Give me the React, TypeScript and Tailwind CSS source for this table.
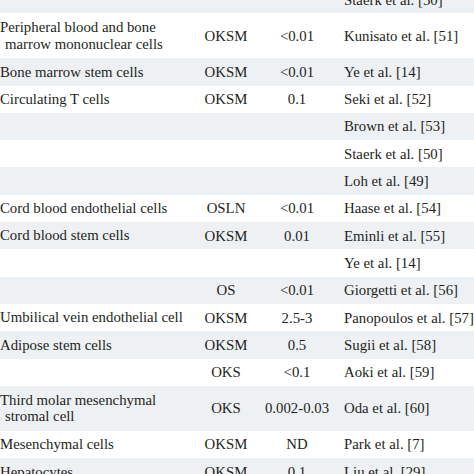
import React from 'react';

type Row = {
  cell?: string[];
  factors?: string;
  efficiency?: string;
  reference: string;
};

const rows: Row[] = [
  { reference: 'Staerk et al. [50]' },
  {
    cell: ['Peripheral blood and bone', 'marrow mononuclear cells'],
    factors: 'OKSM',
    efficiency: '<0.01',
    reference: 'Kunisato et al. [51]',
  },
  { cell: ['Bone marrow stem cells'], factors: 'OKSM', efficiency: '<0.01', reference: 'Ye et al. [14]' },
  { cell: ['Circulating T cells'], factors: 'OKSM', efficiency: '0.1', reference: 'Seki et al. [52]' },
  { reference: 'Brown et al. [53]' },
  { reference: 'Staerk et al. [50]' },
  { reference: 'Loh et al. [49]' },
  { cell: ['Cord blood endothelial cells'], factors: 'OSLN', efficiency: '<0.01', reference: 'Haase et al. [54]' },
  { cell: ['Cord blood stem cells'], factors: 'OKSM', efficiency: '0.01', reference: 'Eminli et al. [55]' },
  { reference: 'Ye et al. [14]' },
  { factors: 'OS', efficiency: '<0.01', reference: 'Giorgetti et al. [56]' },
  { cell: ['Umbilical vein endothelial cell'], factors: 'OKSM', efficiency: '2.5-3', reference: 'Panopoulos et al. [57]' },
  { cell: ['Adipose stem cells'], factors: 'OKSM', efficiency: '0.5', reference: 'Sugii et al. [58]' },
  { factors: 'OKS', efficiency: '<0.1', reference: 'Aoki et al. [59]' },
  {
    cell: ['Third molar mesenchymal', 'stromal cell'],
    factors: 'OKS',
    efficiency: '0.002-0.03',
    reference: 'Oda et al. [60]',
  },
  { cell: ['Mesenchymal cells'], factors: 'OKSM', efficiency: 'ND', reference: 'Park et al. [7]' },
  { cell: ['Hepatocytes'], factors: 'OKSM', efficiency: '0.1', reference: 'Liu et al. [29]' },
];

export default function App() {
  return (
    <div className="h-[474px] w-[474px] overflow-hidden bg-white font-['Liberation_Serif',serif] text-[14.8px] text-[#231f20]">
      <div className="-mt-[14px]">
        {rows.map((row, i) => {
          const twoLine = (row.cell?.length ?? 0) > 1;
          return (
            <div
              key={i}
              className={`grid grid-cols-[190px_72px_70px_1fr] items-center whitespace-nowrap ${
                twoLine ? 'h-[45px]' : 'h-[27.3px]'
              } ${i % 2 === 0 ? 'bg-[#eef1f4]' : 'bg-white'}`}
            >
              <div className="leading-[16.5px]">
                {row.cell?.map((line, j) => (
                  <div key={j} className={j > 0 ? 'pl-[5px]' : ''}>
                    {line}
                  </div>
                ))}
              </div>
              <div className="text-center">{row.factors}</div>
              <div className="text-center">{row.efficiency}</div>
              <div className="pl-3">{row.reference}</div>
            </div>
          );
        })}
      </div>
    </div>
  );
}
